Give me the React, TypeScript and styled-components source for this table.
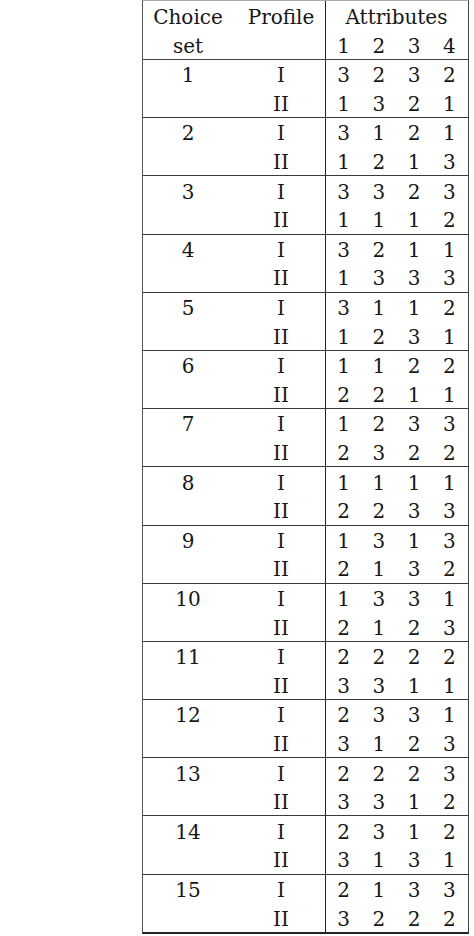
import styled, { createGlobalStyle } from "styled-components";

type Choice = {
  set: number;
  profiles: [number[], number[]];
};

const choices: Choice[] = [
  { set: 1, profiles: [[3, 2, 3, 2], [1, 3, 2, 1]] },
  { set: 2, profiles: [[3, 1, 2, 1], [1, 2, 1, 3]] },
  { set: 3, profiles: [[3, 3, 2, 3], [1, 1, 1, 2]] },
  { set: 4, profiles: [[3, 2, 1, 1], [1, 3, 3, 3]] },
  { set: 5, profiles: [[3, 1, 1, 2], [1, 2, 3, 1]] },
  { set: 6, profiles: [[1, 1, 2, 2], [2, 2, 1, 1]] },
  { set: 7, profiles: [[1, 2, 3, 3], [2, 3, 2, 2]] },
  { set: 8, profiles: [[1, 1, 1, 1], [2, 2, 3, 3]] },
  { set: 9, profiles: [[1, 3, 1, 3], [2, 1, 3, 2]] },
  { set: 10, profiles: [[1, 3, 3, 1], [2, 1, 2, 3]] },
  { set: 11, profiles: [[2, 2, 2, 2], [3, 3, 1, 1]] },
  { set: 12, profiles: [[2, 3, 3, 1], [3, 1, 2, 3]] },
  { set: 13, profiles: [[2, 2, 2, 3], [3, 3, 1, 2]] },
  { set: 14, profiles: [[2, 3, 1, 2], [3, 1, 3, 1]] },
  { set: 15, profiles: [[2, 1, 3, 3], [3, 2, 2, 2]] },
];

const GlobalStyle = createGlobalStyle`
  html, body {
    margin: 0;
    padding: 0;
    background: #ffffff;
  }
  body {
    font-family: "DejaVu Serif", "Liberation Serif", serif;
    color: #161616;
  }
`;

const Page = styled.div`
  width: 474px;
  height: 936px;
  overflow: hidden;
  padding-left: 142px;
  box-sizing: border-box;
`;

const Table = styled.div`
  width: 327px;
  border-left: 1px solid #555;
  border-right: 1px solid #444;
  border-top: 1px solid #aaa;
  border-bottom: 2px solid #222;
  box-sizing: border-box;
`;

const Header = styled.div`
  border-bottom: 1px solid #444;
`;

const Group = styled.div`
  & + & {
    border-top: 1px solid #3a3a3a;
  }
`;

const Row = styled.div<{ $h: number }>`
  display: grid;
  grid-template-columns: 90px 92px 1fr;
  height: ${({ $h }) => $h}px;
  font-size: 20px;
  line-height: 1;
`;

const Cell = styled.div<{ $shift?: number }>`
  display: flex;
  align-items: center;
  justify-content: center;
  padding-left: ${({ $shift }) => $shift ?? 0}px;
  padding-top: 2px;
  white-space: nowrap;
`;

const Attrs = styled.div`
  display: grid;
  grid-template-columns: repeat(4, 1fr);
  border-left: 1.5px solid #222;
  padding-right: 1px;
`;

const AttrTitle = styled(Cell)`
  grid-column: 1 / -1;
`;

const Num = styled(Cell)``;

export default function App() {
  return (
    <>
      <GlobalStyle />
      <Page>
        <Table>
          <Header>
            <Row $h={29}>
              <Cell>Choice</Cell>
              <Cell $shift={4}>Profile</Cell>
              <Attrs>
                <AttrTitle>Attributes</AttrTitle>
              </Attrs>
            </Row>
            <Row $h={29}>
              <Cell>set</Cell>
              <Cell />
              <Attrs>
                {[1, 2, 3, 4].map((n) => (
                  <Num key={n}>{n}</Num>
                ))}
              </Attrs>
            </Row>
          </Header>
          {choices.map((c) => (
            <Group key={c.set}>
              {c.profiles.map((p, i) => (
                <Row $h={28.6} key={i}>
                  <Cell>{i === 0 ? c.set : ""}</Cell>
                  <Cell $shift={4}>{i === 0 ? "I" : "II"}</Cell>
                  <Attrs>
                    {p.map((v, j) => (
                      <Num key={j}>{v}</Num>
                    ))}
                  </Attrs>
                </Row>
              ))}
            </Group>
          ))}
        </Table>
      </Page>
    </>
  );
}
